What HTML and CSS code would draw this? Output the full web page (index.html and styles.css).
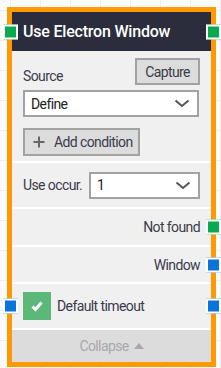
FILE: index.html
```html
<!DOCTYPE html>
<html>
<head>
<meta charset="utf-8">
<link rel="stylesheet" href="styles.css">
</head>
<body>
<div class="node">
  <div class="header">
    <span class="port port-green port-left"></span>
    <span class="title">Use Electron Window</span>
    <span class="port port-green port-right"></span>
  </div>
  <div class="section s1">
    <div class="row-top">
      <span class="label">Source</span>
      <button class="btn capture">Capture</button>
    </div>
    <div class="select wide">
      <span>Define</span>
      <svg class="chev" width="16" height="9" viewBox="0 0 16 9"><path d="M1.5 1.5 L8 7 L14.5 1.5" fill="none" stroke="#555" stroke-width="2"/></svg>
    </div>
    <button class="btn add">
      <svg class="plus" width="12" height="12" viewBox="0 0 12 12"><path d="M6 0.5 V11.5 M0.5 6 H11.5" stroke="#666" stroke-width="2"/></svg>
      <span>Add condition</span>
    </button>
  </div>
  <div class="section s2">
    <span class="label">Use occur.</span>
    <div class="select occ">
      <span>1</span>
      <svg class="chev" width="16" height="9" viewBox="0 0 16 9"><path d="M1.5 1.5 L8 7 L14.5 1.5" fill="none" stroke="#555" stroke-width="2"/></svg>
    </div>
  </div>
  <div class="section out s3">
    <span class="label">Not found</span>
    <span class="port port-green port-right"></span>
  </div>
  <div class="section out s4">
    <span class="label">Window</span>
    <span class="port port-blue port-right"></span>
  </div>
  <div class="section s5">
    <span class="port port-blue port-left"></span>
    <span class="check"><svg width="12" height="11" viewBox="0 0 12 11"><path d="M1.5 5.5 L4.5 8.5 L10.5 1.5" fill="none" stroke="#fff" stroke-width="3"/></svg></span>
    <span class="label">Default timeout</span>
    <span class="port port-blue port-right"></span>
  </div>
  <div class="footer">
    <span>Collapse</span>
    <span class="tri"></span>
  </div>
</div>
</body>
</html>
```

FILE: styles.css
```css
html, body {
  margin: 0;
  padding: 0;
}
body {
  width: 221px;
  height: 368px;
  overflow: hidden;
  background-color: #fbfbfb;
  background-image:
    linear-gradient(to right, #ececec 1px, transparent 1px),
    linear-gradient(to bottom, #ececec 1px, transparent 1px);
  background-size: 30px 30px;
  background-position: 10px 10px;
  font-family: Roboto, "Liberation Sans", sans-serif;
  color: #3b3b4b;
}
.node {
  box-sizing: border-box;
  margin: 7px 0 0 7px;
  width: 209px;
  height: 360px;
  border: 5px solid #ff9900;
  background: #f0f0f0;
  display: flex;
  flex-direction: column;
}
.header {
  position: relative;
  height: 39px;
  flex: none;
  background: #2b2d3c;
  display: flex;
  align-items: center;
  padding-left: 11px;
}
.title {
  color: #fff;
  font-weight: 500;
  font-size: 16px;
  letter-spacing: -0.2px;
}
.port {
  position: absolute;
  width: 11px;
  height: 11px;
  border: 2px solid #fff;
  top: 50%;
  transform: translateY(-50%);
}
.port-green { background: #0aa84f; }
.port-blue { background: #0b74d8; }
.port-left { left: -9px; }
.port-right { left: 194px; }
.section {
  position: relative;
  flex: none;
  box-sizing: border-box;
  border-bottom: 2px solid #ffffff;
  padding: 0 11px;
}
.label {
  font-size: 14px;
  letter-spacing: -0.6px;
}
.s1 {
  height: 112px;
  padding-top: 7px;
  display: flex;
  flex-direction: column;
}
.row-top {
  display: flex;
  justify-content: space-between;
  align-items: flex-end;
  height: 27px;
}
.row-top .label {
  line-height: 1;
  margin-bottom: 2px;
}
.btn {
  box-sizing: border-box;
  flex: none;
  background: #dcdcdc;
  border: 2px solid #a2a2a2;
  font-family: Roboto, "Liberation Sans", sans-serif;
  font-size: 14px;
  letter-spacing: -0.6px;
  color: #3b3b4b;
  padding: 0;
  margin: 0;
  display: flex;
  align-items: center;
}
.capture {
  width: 65px;
  height: 27px;
  justify-content: center;
}
.select {
  box-sizing: border-box;
  flex: none;
  height: 27px;
  background: #fff;
  border: 2px solid #a2a2a2;
  display: flex;
  align-items: center;
  justify-content: space-between;
  padding: 0 7px 0 6px;
  font-size: 14px;
  letter-spacing: -0.6px;
  color: #222;
}
.select.wide {
  margin-top: 5px;
  width: 176px;
}
.add {
  margin-top: 11px;
  width: 117px;
  height: 28px;
  padding-left: 8px;
  gap: 9px;
}
.s2 {
  height: 46px;
  display: flex;
  align-items: center;
  justify-content: space-between;
}
.select.occ {
  width: 111px;
}
.out {
  display: flex;
  align-items: center;
  justify-content: flex-end;
}
.s3 { height: 38px; }
.s4 { height: 37px; }
.s5 {
  height: 46px;
  display: flex;
  align-items: center;
  gap: 6px;
}
.check {
  width: 28px;
  height: 28px;
  background: #5cb878;
  display: flex;
  align-items: center;
  justify-content: center;
}
.check svg { display: block; }
.footer {
  height: 32px;
  flex: none;
  background: #dcdcdc;
  display: flex;
  align-items: center;
  justify-content: center;
  gap: 5px;
  color: #a8a8ae;
  font-size: 14px;
  letter-spacing: -0.6px;
}
.tri {
  width: 0;
  height: 0;
  border-left: 5px solid transparent;
  border-right: 5px solid transparent;
  border-bottom: 6px solid #a8a8ae;
}
.chev { display: block; }
.plus { display: block; }
```
